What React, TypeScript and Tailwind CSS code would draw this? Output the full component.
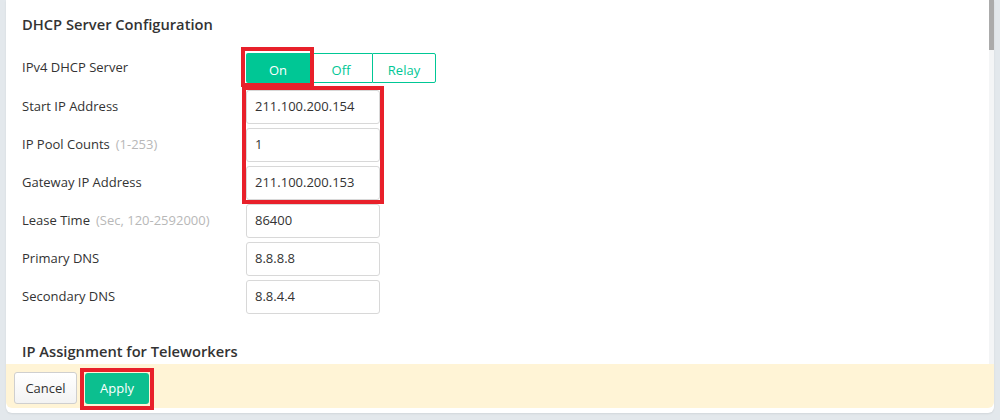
const rows = [
    { label: 'Start IP Address', value: '211.100.200.154' },
    { label: 'IP Pool Counts', hint: '(1-253)', value: '1' },
    { label: 'Gateway IP Address', value: '211.100.200.153' },
    { label: 'Lease Time', hint: '(Sec, 120-2592000)', value: '86400' },
    { label: 'Primary DNS', value: '8.8.8.8' },
    { label: 'Secondary DNS', value: '8.8.4.4' },
]

const Field = ({ label, hint, value }: { label: string; hint?: string; value: string }) => (
    <div className="flex items-center h-[38px] pt-[1px]">
        <div className="w-[224px] flex items-center gap-[6px] text-[13px] text-[#333]">
            <span>{label}</span>
            {hint && <span className="text-[13px] text-[#b8b8b8]">{hint}</span>}
        </div>
        <div className="w-[134px] h-[34px] flex items-center px-2 border border-[#d8d8d8] rounded-[3px] bg-white text-[13px] text-[#333]">
            {value}
        </div>
    </div>
)

export default function App() {
    return (
        <div
            className="w-[1000px] h-[420px] bg-[#e3e8ec] pl-[6px] pr-[6px] pb-[7px] flex"
            style={{ fontFamily: '"Open Sans", "Noto Sans", sans-serif' }}
        >
            <div className="flex-1 flex flex-col bg-white rounded-b-[6px] shadow-[0_1px_2px_rgba(0,0,0,0.08)] overflow-hidden">
                <div className="flex-1 flex min-h-0">
                    <div className="flex-1 pl-4 pt-[14px]">
                        <h2 className="text-[14.7px] leading-5 font-semibold text-[#333] mb-[15px]">
                            DHCP Server Configuration
                        </h2>

                        <div className="flex items-center h-[38px]">
                            <div className="w-[224px] text-[13px] text-[#333]">IPv4 DHCP Server</div>
                            <div className="relative flex h-[30px] text-[13px]">
                                <button className="w-[64px] h-full pt-[5px] bg-[#00c795] text-white rounded-l-[2px]">On</button>
                                <button className="w-[62px] h-full pt-[5px] border-y border-[#00c795] text-[#00c795]">Off</button>
                                <button className="w-[64px] h-full pt-[5px] border border-[#00c795] text-[#00c795] rounded-r-[2px]">Relay</button>
                                <div className="absolute left-[-5px] top-[-6px] w-[73px] h-[40px] border-[4px] border-[#e8202a] pointer-events-none" />
                            </div>
                        </div>

                        <div className="relative">
                            {rows.map((r) => (
                                <Field key={r.label} {...r} />
                            ))}
                            <div className="absolute left-[220px] top-[-1px] w-[142px] h-[118px] border-[4px] border-[#e8202a] pointer-events-none" />
                        </div>

                        <h2 className="mt-[26px] text-[14.7px] leading-5 font-semibold text-[#333]">
                            IP Assignment for Teleworkers
                        </h2>
                    </div>
                    <div className="w-[5px] flex flex-col bg-[#f4f5f6]">
                        <div className="h-[50px] bg-[#ababab]" />
                    </div>
                </div>

                <div className="h-[44px] bg-[#fff4d6] rounded-b-[6px] flex items-center gap-2 pl-2 pt-[4px] mb-[5px]">
                    <button className="w-[63px] h-[32px] pt-[2px] rounded-[3px] border border-[#cfcfcf] bg-gradient-to-b from-white to-[#f3f3f3] text-[13px] text-[#333]">
                        Cancel
                    </button>
                    <div className="relative">
                        <button className="w-[64px] h-[31px] pt-[2px] rounded-[3px] bg-[#0cbf8f] text-[13px] text-white">
                            Apply
                        </button>
                        <div className="absolute left-[-5px] top-[-5px] w-[74px] h-[42px] border-[4px] border-[#e8202a] pointer-events-none" />
                    </div>
                </div>
            </div>
        </div>
    )
}
